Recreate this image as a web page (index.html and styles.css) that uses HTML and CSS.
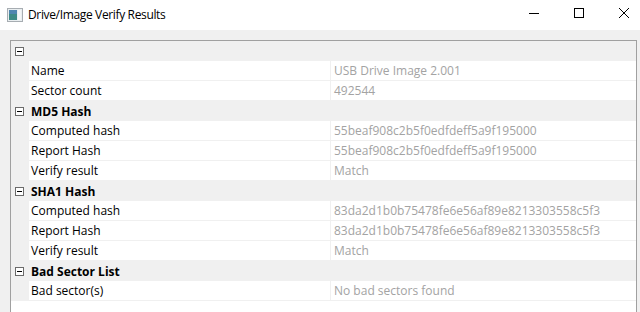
FILE: index.html
```html
<!DOCTYPE html>
<html lang="en">
<head>
  <meta charset="UTF-8" />
  <title>Drive/Image Verify Results</title>
  <link rel="stylesheet" href="styles.css">
</head>
<body>
  <div class="window">
    <!-- Title bar -->
    <div class="titlebar">
      <svg class="app-icon" width="16" height="14" viewBox="0 0 16 14">
        <rect x="0.5" y="0.5" width="15" height="13" fill="#e9eef0" stroke="#a7adb2"/>
        <rect x="2" y="2" width="8" height="10" fill="#3d8a86"/>
        <rect x="2" y="2" width="8" height="4" fill="#4f86b0"/>
        <rect x="11" y="2" width="3" height="10" fill="#f4f7f8"/>
      </svg>
      <span class="title">Drive/Image Verify Results</span>
      <div class="caption-btns">
        <span class="cap-btn">
          <svg width="10" height="10" viewBox="0 0 10 10"><path d="M0 5.5H10" stroke="#000" stroke-width="1"/></svg>
        </span>
        <span class="cap-btn">
          <svg width="10" height="10" viewBox="0 0 10 10"><rect x="0.5" y="0.5" width="9" height="9" fill="none" stroke="#000"/></svg>
        </span>
        <span class="cap-btn">
          <svg width="10" height="10" viewBox="0 0 10 10"><path d="M0 0L10 10M10 0L0 10" stroke="#000" stroke-width="1"/></svg>
        </span>
      </div>
    </div>

    <!-- Property grid -->
    <div class="client">
      <div class="grid" id="grid"></div>
    </div>
  </div>

  <script>
    const sections = [
      { title: '', items: [
        ['Name', 'USB Drive Image 2.001'],
        ['Sector count', '492544']
      ]},
      { title: 'MD5 Hash', items: [
        ['Computed hash', '55beaf908c2b5f0edfdeff5a9f195000'],
        ['Report Hash', '55beaf908c2b5f0edfdeff5a9f195000'],
        ['Verify result', 'Match']
      ]},
      { title: 'SHA1 Hash', items: [
        ['Computed hash', '83da2d1b0b75478fe6e56af89e8213303558c5f3'],
        ['Report Hash', '83da2d1b0b75478fe6e56af89e8213303558c5f3'],
        ['Verify result', 'Match']
      ]},
      { title: 'Bad Sector List', items: [
        ['Bad sector(s)', 'No bad sectors found']
      ]}
    ];

    const grid = document.getElementById('grid');
    let html = '';
    sections.forEach(sec => {
      html += `<div class="row cat"><span class="toggle"></span><span class="cat-name">${sec.title}</span></div>`;
      sec.items.forEach(([name, value]) => {
        html += `<div class="row prop"><span class="margin"></span><span class="name">${name}</span><span class="value">${value}</span></div>`;
      });
    });
    grid.innerHTML = html;
  </script>
</body>
</html>
```

FILE: styles.css
```css
body {
  margin: 0;
  font-family: 'Open Sans', 'Noto Sans', sans-serif;
  font-size: 12px;
  color: #000;
  background-color: #f0f0f0;
  overflow: hidden;
}
.window {
  width: 640px;
  height: 312px;
  display: flex;
  flex-direction: column;
}
.titlebar {
  height: 30px;
  background-color: #fff;
  display: flex;
  align-items: center;
  padding-left: 7px;
  flex-shrink: 0;
}
.app-icon {
  margin-right: 5px;
  margin-top: -1px;
}
.title {
  font-size: 12px;
  letter-spacing: -0.35px;
  margin-top: -1px;
}
.caption-btns {
  margin-left: auto;
  margin-right: -6px;
  display: flex;
  height: 100%;
}
.cap-btn {
  width: 45px;
  height: 100%;
  display: flex;
  align-items: center;
  justify-content: center;
  margin-top: -2px;
}
.client {
  flex: 1;
  padding: 10px 3px 0 10px;
  display: flex;
  flex-direction: column;
}
.grid {
  flex: 1;
  background-color: #fff;
  border: 1px solid #a0a0a0;
  border-bottom: none;
}
.row {
  height: 20px;
  display: flex;
  align-items: center;
}
.cat {
  background-color: #f0f0f0;
  font-weight: bold;
}
.toggle {
  width: 9px;
  height: 9px;
  box-sizing: border-box;
  border: 1px solid #6b6b6b;
  margin: 0 7px 0 4px;
  position: relative;
  background-color: #fff;
}
.toggle::after {
  content: '';
  position: absolute;
  left: 1px;
  right: 1px;
  top: 3px;
  height: 1px;
  background-color: #000;
}
.prop {
  box-sizing: border-box;
  border-bottom: 1px solid #f0f0f0;
}
.margin {
  width: 18px;
  height: 20px;
  background-color: #f0f0f0;
  flex-shrink: 0;
}
.name {
  width: 302px;
  padding-left: 2px;
  box-sizing: border-box;
  border-right: 1px solid #f0f0f0;
  height: 100%;
  display: flex;
  align-items: center;
}
.value {
  padding-left: 3px;
  color: #a3a3a3;
  height: 100%;
  display: flex;
  align-items: center;
}
```
